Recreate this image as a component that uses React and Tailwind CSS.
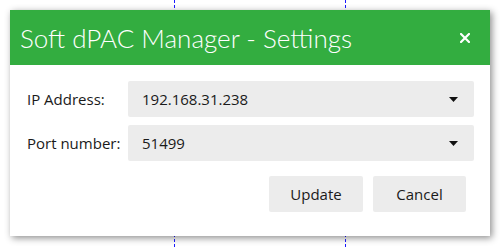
export default function App() {
  const body = { fontFamily: '"Open Sans", "Noto Sans", sans-serif' };
  const title = { fontFamily: 'Lato, "Open Sans", sans-serif' };
  const Arrow = () => (
    <svg width="9" height="5" viewBox="0 0 9 5" className="shrink-0">
      <path d="M0 0 L9 0 L4.5 5 Z" fill="#111" />
    </svg>
  );
  return (
    <div className="relative w-[500px] h-[247px] bg-white overflow-hidden">
      <div className="absolute left-[174px] top-0 h-full border-l border-dashed border-[#1a1aff]" />
      <div className="absolute left-[345px] top-0 h-full border-l border-dashed border-[#1a1aff]" />
      <div className="relative ml-[10px] mt-[10px] w-[480px] h-[226px] bg-white shadow-[2px_2px_7px_rgba(0,0,0,0.45)] flex flex-col">
        <div className="h-[55px] bg-[#33ad40] flex items-center justify-between pl-[10px] pr-[20px]">
          <span className="text-white text-[26px] font-light leading-none" style={title}>Soft dPAC Manager - Settings</span>
          <svg width="10" height="10" viewBox="0 0 10 10">
            <path d="M1 1 L9 9 M9 1 L1 9" stroke="white" strokeWidth="2.2" strokeLinecap="square" />
          </svg>
        </div>
        <div className="flex flex-col pl-[17px] pr-[16px] pt-[16px] gap-[8px] text-[15px] text-[#1a1a1a]" style={body}>
          <div className="flex items-center">
            <span className="w-[101px]">IP Address:</span>
            <div className="flex-1 h-[36px] bg-[#ececec] rounded-[2px] flex items-center justify-between pl-[14px] pr-[16px]">
              <span>192.168.31.238</span>
              <Arrow />
            </div>
          </div>
          <div className="flex items-center">
            <span className="w-[101px]">Port number:</span>
            <div className="flex-1 h-[36px] bg-[#ececec] rounded-[2px] flex items-center justify-between pl-[14px] pr-[16px]">
              <span>51499</span>
              <Arrow />
            </div>
          </div>
        </div>
        <div className="flex justify-end gap-[10px] pr-[24px] pt-[15px] text-[15px] text-[#1a1a1a]" style={body}>
          <button className="w-[94px] h-[36px] bg-[#ececec] rounded-[2px]">Update</button>
          <button className="w-[93px] h-[36px] bg-[#ececec] rounded-[2px]">Cancel</button>
        </div>
      </div>
    </div>
  );
}
